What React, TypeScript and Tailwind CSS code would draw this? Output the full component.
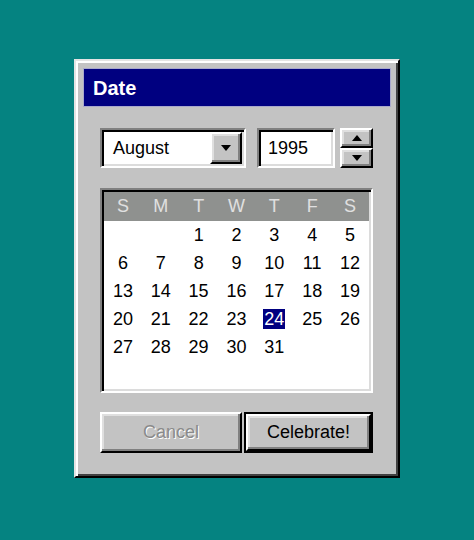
import React from 'react';

const weeks: (number | null)[][] = [
  [null, null, 1, 2, 3, 4, 5],
  [6, 7, 8, 9, 10, 11, 12],
  [13, 14, 15, 16, 17, 18, 19],
  [20, 21, 22, 23, 24, 25, 26],
  [27, 28, 29, 30, 31, null, null],
];

const dayNames = ['S', 'M', 'T', 'W', 'T', 'F', 'S'];

const sunken =
  'border-2 border-t-[#808080] border-l-[#808080] border-r-white border-b-white shadow-[inset_2px_2px_0_#000000,inset_-2px_-2px_0_#dcdcdc]';
const raised =
  'border-2 border-t-white border-l-white border-r-black border-b-black shadow-[inset_-2px_-2px_0_#808080,inset_2px_2px_0_#dfdfdf] bg-[#c3c3c3]';

const Arrow: React.FC<{ up?: boolean }> = ({ up }) => (
  <svg width="10" height="6" viewBox="0 0 10 6" className="block">
    {up ? <path d="M5 0 L10 6 L0 6 Z" fill="#000" /> : <path d="M0 0 L10 0 L5 6 Z" fill="#000" />}
  </svg>
);

const App: React.FC = () => {
  return (
    <div className="w-[474px] h-[540px] bg-[#058381] pt-[59px] pl-[74px] font-['Liberation_Sans',Arial,sans-serif]">
      <div className="w-[326px] h-[419px] bg-[#c3c3c3] border-2 border-t-[#e4e4e4] border-l-[#e4e4e4] border-r-black border-b-black shadow-[inset_2px_2px_0_#ffffff,inset_-2px_-2px_0_#404040]">
        {/* Title bar */}
        <div className="px-[7px] pt-[7px]">
          <div className="h-[39px] bg-[#000080] border border-[#a8a8cc] flex items-center pl-[9px]">
            <span className="text-white font-bold text-[20px] leading-none">Date</span>
          </div>
        </div>

        <div className="pl-[24px] pr-[25px]">
          {/* Month / year row */}
          <div className="mt-[21px] flex h-[40px]">
            <div className={`w-[146px] h-full bg-white flex items-stretch ${sunken}`}>
              <div className="flex-1 flex items-center pl-[11px] text-[18px] text-black">August</div>
              <div className={`w-[32px] my-[2px] mr-[2px] flex items-center justify-center ${raised}`}>
                <Arrow />
              </div>
            </div>
            <div className={`ml-[11px] w-[78px] h-full bg-white flex items-center pl-[9px] text-[18px] text-black ${sunken}`}>
              1995
            </div>
            <div className="ml-[5px] w-[33px] h-full flex flex-col">
              <div className={`flex-1 flex items-center justify-center ${raised}`}>
                <Arrow up />
              </div>
              <div className={`flex-1 flex items-center justify-center ${raised}`}>
                <Arrow />
              </div>
            </div>
          </div>

          {/* Calendar */}
          <div className={`mt-[20px] h-[205px] bg-white ${sunken} p-[2px]`}>
            <div className="grid grid-cols-7 h-[29px] bg-[#8f918f]">
              {dayNames.map((d, i) => (
                <div key={i} className="flex items-center justify-center text-[18px] text-[#e0e0e0]">
                  {d}
                </div>
              ))}
            </div>
            {weeks.map((w, r) => (
              <div key={r} className="grid grid-cols-7 h-[28px]">
                {w.map((n, c) => (
                  <div key={c} className="flex items-center justify-center text-[18px] text-black">
                    {n !== null &&
                      (n === 24 ? (
                        <span className="bg-[#000080] text-white px-[1px] leading-[20px]">{n}</span>
                      ) : (
                        <span>{n}</span>
                      ))}
                  </div>
                ))}
              </div>
            ))}
          </div>

          {/* Buttons */}
          <div className="mt-[19px] flex h-[41px]">
            <div className={`w-[142px] h-full flex items-center justify-center text-[18px] text-[#8a8a8a] [text-shadow:1px_1px_0_#ffffff] ${raised}`}>
              Cancel
            </div>
            <div className="ml-[2px] flex-1 h-full border-2 border-black">
              <div className={`h-full flex items-center justify-center text-[18px] text-black ${raised}`}>
                Celebrate!
              </div>
            </div>
          </div>
        </div>
      </div>
    </div>
  );
};

export default App;
